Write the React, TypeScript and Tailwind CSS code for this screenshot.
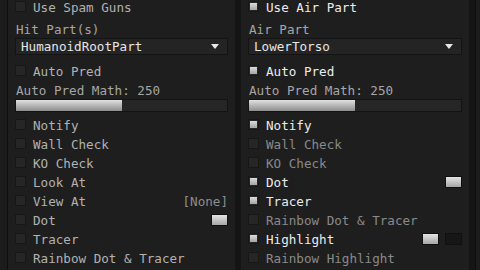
import React from "react";

const FONT = { fontFamily: '"DejaVu Sans Mono", "Liberation Mono", monospace' };

function Box({ checked }: { checked: boolean }) {
  return (
    <div className="w-[11px] h-[11px] shrink-0 bg-[#262626] border border-[#171717] flex items-center justify-center">
      {checked && <div className="w-[7px] h-[7px] bg-gradient-to-b from-[#dcdcdc] to-[#a4a4a4]" />}
    </div>
  );
}

function Swatch({ dark }: { dark?: boolean }) {
  return (
    <div
      className={`w-[17px] h-[12px] border border-[#101010] ${
        dark ? "bg-[#161616]" : "bg-gradient-to-b from-[#e4e4e4] to-[#a6a6a6]"
      }`}
    />
  );
}

function Check({
  label,
  checked = false,
  tone = "left",
  children,
}: {
  label: string;
  checked?: boolean;
  tone?: "left" | "right";
  children?: React.ReactNode;
}) {
  const color = checked ? "text-[#ececec]" : tone === "left" ? "text-[#b2b2b2]" : "text-[#8a8a8a]";
  return (
    <div className="h-[19px] flex items-center gap-[7px]">
      <Box checked={checked} />
      <span className={`${color} pt-[3px]`}>{label}</span>
      {children && <div className="ml-auto flex items-center gap-[6px]">{children}</div>}
    </div>
  );
}

function Label({ text, tall }: { text: string; tall?: boolean }) {
  return (
    <div className={`${tall ? "h-[22px] pt-[6px]" : "h-[19px] pt-[3px]"} flex items-center pl-[1px] text-[#a6a6a6]`}>
      {text}
    </div>
  );
}

function Dropdown({ value }: { value: string }) {
  return (
    <div className="h-[17px] bg-[#242424] border border-[#141414] flex items-center pl-[5px] pr-[8px] text-[#e6e6e6]">
      <span className="pt-[2px]">{value}</span>
      <svg className="ml-auto" width="8" height="6" viewBox="0 0 8 6">
        <path d="M0 0 H8 L4 5 Z" fill="#e8e8e8" />
      </svg>
    </div>
  );
}

function Slider() {
  return (
    <div className="h-[13px] bg-[#262626] border border-[#131313] flex">
      <div className="w-1/2 h-full bg-gradient-to-b from-[#e2e2e2] to-[#8e8e8e]" />
    </div>
  );
}

export default function App() {
  return (
    <div className="w-[480px] h-[270px] overflow-hidden bg-[#181818] flex text-[12.6px] leading-none" style={FONT}>
      <div className="w-[8px] bg-[#1c1c1c] border-r border-[#0e0e0e]" />

      {/* Left panel */}
      <div className="w-[227px] px-[7px] bg-[#1e1e1e]">
        <div className="-mt-[3px] flex flex-col">
          <Check label="Use Spam Guns" />
          <Label text="Hit Part(s)" tall />
          <Dropdown value="HumanoidRootPart" />
          <div className="mt-[6px]">
            <Check label="Auto Pred" />
          </div>
          <Label text="Auto Pred Math: 250" />
          <Slider />
          <div className="mt-[3px]">
            <Check label="Notify" />
            <Check label="Wall Check" />
            <Check label="KO Check" />
            <Check label="Look At" />
            <Check label="View At">
              <span className="text-[#8e8e8e] pt-[3px]">[None]</span>
            </Check>
            <Check label="Dot">
              <Swatch />
            </Check>
            <Check label="Tracer" />
            <Check label="Rainbow Dot & Tracer" />
          </div>
        </div>
      </div>

      <div className="w-[6px] bg-[#151515]" />

      {/* Right panel */}
      <div className="w-[228px] px-[7px] bg-[#1e1e1e]">
        <div className="-mt-[3px] flex flex-col">
          <Check label="Use Air Part" checked />
          <Label text="Air Part" tall />
          <Dropdown value="LowerTorso" />
          <div className="mt-[6px]">
            <Check label="Auto Pred" checked />
          </div>
          <Label text="Auto Pred Math: 250" />
          <Slider />
          <div className="mt-[3px]">
            <Check label="Notify" checked />
            <Check label="Wall Check" tone="right" />
            <Check label="KO Check" tone="right" />
            <Check label="Dot" checked>
              <Swatch />
            </Check>
            <Check label="Tracer" checked />
            <Check label="Rainbow Dot & Tracer" tone="right" />
            <Check label="Highlight" checked>
              <Swatch />
              <Swatch dark />
            </Check>
            <Check label="Rainbow Highlight" tone="right" />
          </div>
        </div>
      </div>

      <div className="w-[7px] bg-[#151515] border-r border-[#0e0e0e]" />
      <div className="flex-1 bg-[#1c1c1c]" />
    </div>
  );
}
